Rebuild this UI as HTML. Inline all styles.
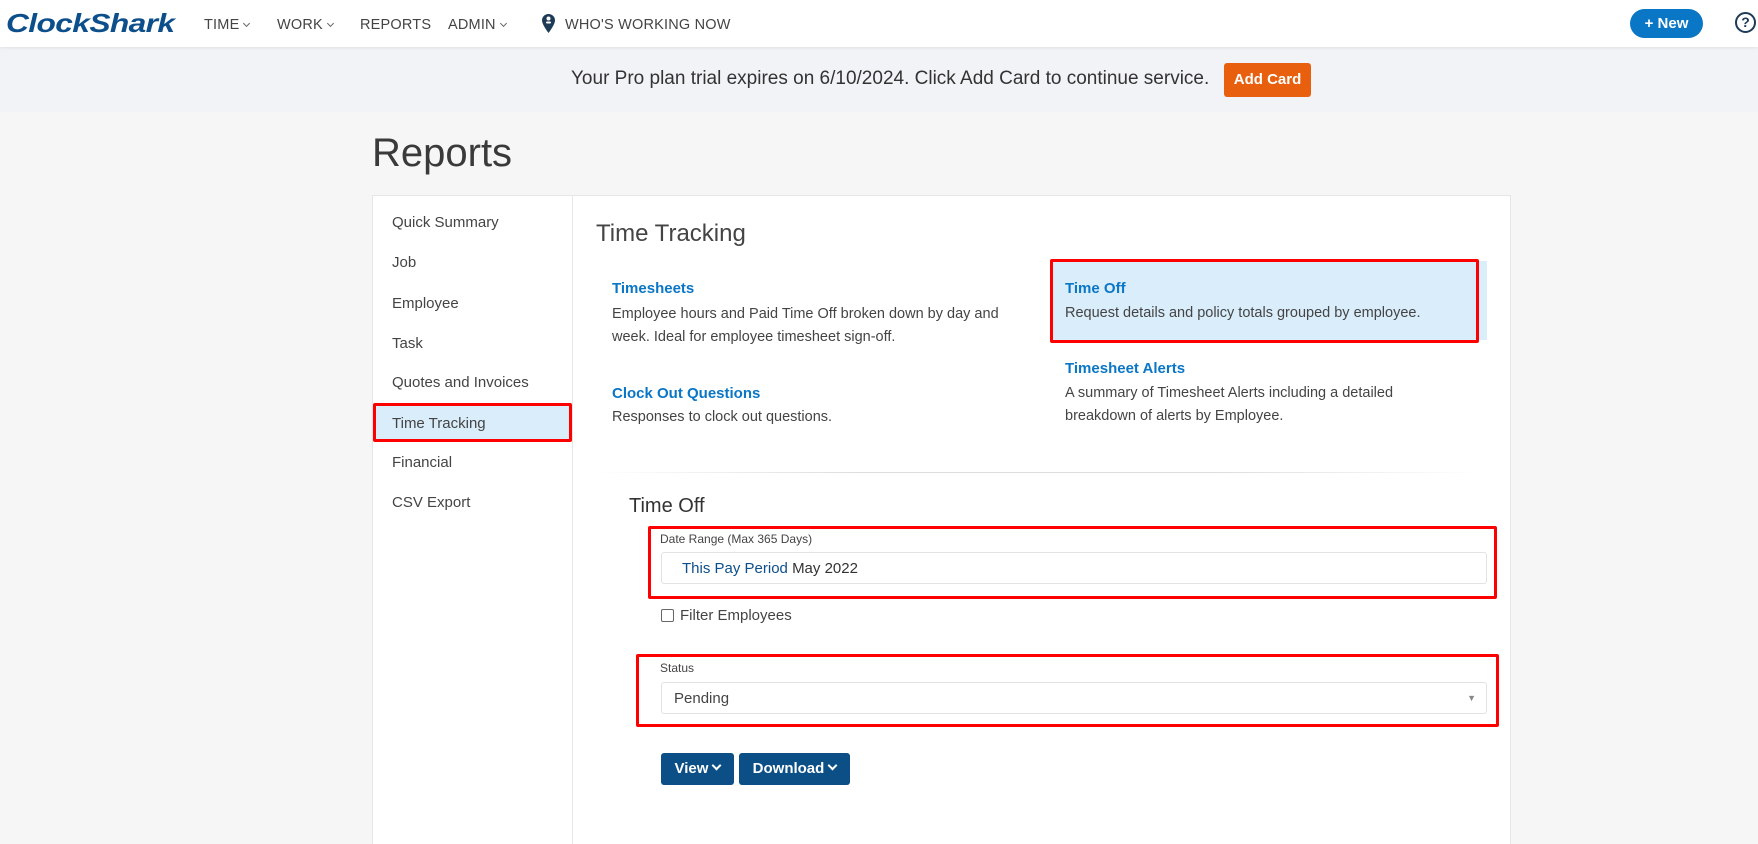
<!DOCTYPE html>
<html><head><meta charset="utf-8"><style>
*{box-sizing:border-box;margin:0;padding:0}
html,body{width:1758px;height:844px;overflow:hidden}
body{background:#f6f6f7;font-family:"Liberation Sans",sans-serif;color:#333;position:relative}
.abs{position:absolute}
.nav{left:0;top:0;width:1758px;height:47px;background:#fff;box-shadow:0 1px 3px rgba(0,0,0,.08);z-index:2}
.nav .it{position:absolute;top:17px;font-size:14.5px;color:#444;letter-spacing:.2px}
.chev{display:inline-block;width:5px;height:5px;border-right:1px solid #666;border-bottom:1px solid #666;transform:rotate(45deg);margin-left:5px;position:relative;top:-3px}
.logo{left:6px;top:8px;font-size:26px;font-weight:bold;font-style:italic;color:#0d4f8b;letter-spacing:-0.5px;transform:scaleX(1.22);transform-origin:left}
.new{left:1630px;top:9px;width:73px;height:29px;background:#0a76c6;border-radius:15px;color:#fff;font-weight:bold;font-size:15px;text-align:center;line-height:29px}
.help{left:1735px;top:12px;width:21px;height:21px;border:2px solid #1d3a57;border-radius:50%;text-align:center;font-weight:bold;font-size:14px;line-height:17px;color:#1d3a57}
.banner{left:0;top:47px;width:1758px;height:65px;background:#f2f3f6}
.btext{left:571px;top:68px;font-size:19px;color:#333}
.addcard{left:1224px;top:63px;width:87px;height:34px;background:#e8600e;border-radius:3px;color:#fff;font-weight:bold;font-size:15px;text-align:center;line-height:34px}
.title{left:372px;top:131px;font-size:40px;color:#3a3a3a}
.panel{left:372px;top:195px;width:1139px;height:660px;background:#fff;border:1px solid #e6e6e6}
.side{left:572px;top:195px;width:1px;height:660px;background:#e6e6e6}
.si{position:absolute;left:392px;font-size:15px;color:#444}
.hl{left:373px;top:403px;width:199px;height:39px;background:#d9edfb;border:3px solid #f00;border-radius:2px}
.h2{left:596px;top:220px;font-size:24px;color:#444}
.lk{position:absolute;font-size:15px;color:#0a76c6;font-weight:bold}
.ds{position:absolute;font-size:14.5px;color:#444;line-height:22.5px}
.tobox{left:1050px;top:259px;width:429px;height:84px;border:3px solid #f00;background:#d9edfb;border-radius:2px}
.tobg{left:1479px;top:261px;width:8px;height:79px;background:#d9edfb}
.div{left:594px;top:472px;width:886px;height:1px;background:linear-gradient(90deg,#fff,#ddd 30%,#ddd 70%,#fff)}
.h3{left:629px;top:495px;font-size:20px;color:#333}
.rb{border:3px solid #f00;border-radius:2px}
.lbl{position:absolute;font-size:12px;color:#444}
.inp{position:absolute;left:661px;width:826px;height:32px;border:1px solid #e2e2e2;border-radius:3px;background:#fff;font-size:15px}
.btn{position:absolute;top:753px;height:32px;background:#0b4f86;border-radius:3px;color:#fff;font-weight:bold;font-size:15px;line-height:32px;text-align:center}
.bc{display:inline-block;width:7px;height:7px;border-right:2.5px solid #fff;border-bottom:2.5px solid #fff;transform:rotate(45deg);margin-left:5px;position:relative;top:-4px}
</style></head><body>
<div class="abs nav">
<div class="abs logo">ClockShark</div>
<div class="it" style="left:204px">TIME<span class="chev"></span></div>
<div class="it" style="left:277px">WORK<span class="chev"></span></div>
<div class="it" style="left:360px">REPORTS</div>
<div class="it" style="left:448px">ADMIN<span class="chev"></span></div>
<svg class="abs" style="left:542px;top:14px" width="13" height="19" viewBox="0 0 13 19"><path d="M6.5 0C2.9 0 0 2.8 0 6.3c0 4.5 6.5 12.7 6.5 12.7S13 10.8 13 6.3C13 2.8 10.1 0 6.5 0z" fill="#1d3a57"/><circle cx="6.5" cy="4.5" r="2" fill="#fff"/><rect x="4" y="7.5" width="5" height="2" rx="1" fill="#fff"/></svg>
<div class="it" style="left:565px">WHO'S WORKING NOW</div>
<div class="abs new">+ New</div>
<div class="abs help">?</div>
</div>
<div class="abs banner"></div>
<div class="abs btext">Your Pro plan trial expires on 6/10/2024. Click Add Card to continue service.</div>
<div class="abs addcard">Add Card</div>
<div class="abs title">Reports</div>
<div class="abs panel"></div>
<div class="abs side"></div>
<div class="abs hl"></div>
<div class="si" style="top:214px">Quick Summary</div>
<div class="si" style="top:254px">Job</div>
<div class="si" style="top:295px">Employee</div>
<div class="si" style="top:335px">Task</div>
<div class="si" style="top:374px">Quotes and Invoices</div>
<div class="si" style="top:415px">Time Tracking</div>
<div class="si" style="top:454px">Financial</div>
<div class="si" style="top:494px">CSV Export</div>
<div class="abs h2">Time Tracking</div>
<div class="lk" style="left:612px;top:280px">Timesheets</div>
<div class="ds" style="left:612px;top:303px">Employee hours and Paid Time Off broken down by day and<br>week. Ideal for employee timesheet sign-off.</div>
<div class="lk" style="left:612px;top:385px">Clock Out Questions</div>
<div class="ds" style="left:612px;top:406px">Responses to clock out questions.</div>
<div class="abs tobg"></div>
<div class="abs tobox"></div>
<div class="lk" style="left:1065px;top:280px">Time Off</div>
<div class="ds" style="left:1065px;top:302px">Request details and policy totals grouped by employee.</div>
<div class="lk" style="left:1065px;top:360px">Timesheet Alerts</div>
<div class="ds" style="left:1065px;top:382px">A summary of Timesheet Alerts including a detailed<br>breakdown of alerts by Employee.</div>
<div class="abs div"></div>
<div class="abs h3">Time Off</div>
<div class="abs rb" style="left:648px;top:526px;width:849px;height:73px"></div>
<div class="lbl" style="left:660px;top:532px">Date Range (Max 365 Days)</div>
<div class="inp" style="top:552px;line-height:31px;padding-left:20px"><span style="color:#0d4f8b">This Pay Period</span> <span style="color:#333">May 2022</span></div>
<div class="abs" style="left:661px;top:609px;width:13px;height:13px;border:1px solid #666;border-radius:2px"></div>
<div class="abs" style="left:680px;top:607px;font-size:15px;color:#444">Filter Employees</div>
<div class="abs rb" style="left:636px;top:654px;width:863px;height:73px"></div>
<div class="lbl" style="left:660px;top:661px">Status</div>
<div class="inp" style="top:682px;line-height:31px;padding-left:12px;color:#444">Pending<span style="position:absolute;right:10px;top:0;font-size:9px;color:#888">▼</span></div>
<div class="btn" style="left:661px;width:73px">View<span class="bc"></span></div>
<div class="btn" style="left:739px;width:111px">Download<span class="bc"></span></div>
</body></html>
